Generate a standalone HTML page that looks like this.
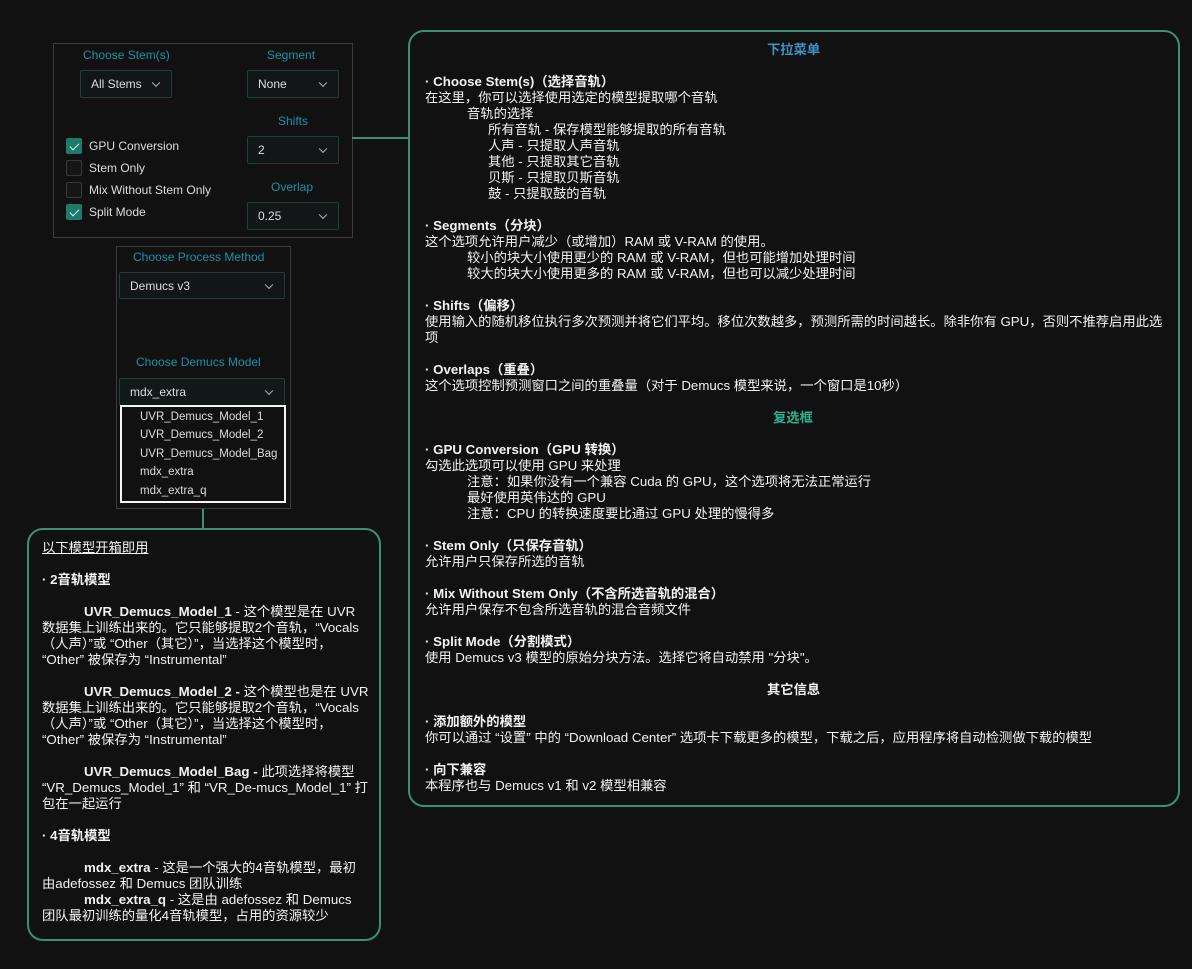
<!DOCTYPE html>
<html><head><meta charset="utf-8"><style>
*{margin:0;padding:0;box-sizing:border-box}
body{width:1192px;height:969px;background:#111112;position:relative;overflow:hidden;font-family:"Liberation Sans","Noto Sans CJK SC",sans-serif;color:#f0f0f0}
.a{position:absolute;white-space:nowrap}
.t{position:absolute;white-space:nowrap;font-size:13.3px;line-height:18px;color:#f2f2f2}
.b{font-weight:bold}
.box{position:absolute;border:2px solid #3a8f77;border-radius:16px;background:#111112}
.lbl{position:absolute;color:#1f8fa8;font-size:12px;white-space:nowrap}
.dd{position:absolute;border:1px solid #1f3f3b;background:#121616;color:#ddd;font-size:12px;padding-left:10px;display:flex;align-items:center;border-radius:2px}
.dd:after{content:"";position:absolute;right:12px;top:50%;width:5px;height:5px;border-right:1.3px solid #bbb;border-bottom:1.3px solid #bbb;transform:translateY(-70%) rotate(45deg)}
.cb{position:absolute;width:16px;height:16px;border:1px solid #3a3a3a;border-radius:2px;background:#161616}
.cb.on{background:#1d7a6a;border-color:#1d7a6a}
.cb.on:after{content:"";position:absolute;left:5px;top:2px;width:4px;height:8px;border-right:1.5px solid #cfe;border-bottom:1.5px solid #cfe;transform:rotate(45deg)}
.cl{position:absolute;color:#ddd;font-size:12px;white-space:nowrap}
</style></head><body>

<div class="a" style="left:53px;top:43px;width:300px;height:195px;border:1px solid #3c3c3c;background:#111"></div>
<div class="lbl" style="left:83px;top:48px">Choose Stem(s)</div>
<div class="lbl" style="left:267px;top:48px">Segment</div>
<div class="dd" style="left:80px;top:70px;width:92px;height:28px">All Stems</div>
<div class="dd" style="left:247px;top:70px;width:92px;height:28px">None</div>
<div class="lbl" style="left:278px;top:114px">Shifts</div>
<div class="dd" style="left:247px;top:136px;width:92px;height:28px">2</div>
<div class="lbl" style="left:271px;top:180px">Overlap</div>
<div class="dd" style="left:247px;top:202px;width:92px;height:28px">0.25</div>
<div class="cb on" style="left:66px;top:138px"></div><div class="cl" style="left:89px;top:139px">GPU Conversion</div>
<div class="cb" style="left:66px;top:160px"></div><div class="cl" style="left:89px;top:161px">Stem Only</div>
<div class="cb" style="left:66px;top:182px"></div><div class="cl" style="left:89px;top:183px">Mix Without Stem Only</div>
<div class="cb on" style="left:66px;top:204px"></div><div class="cl" style="left:89px;top:205px">Split Mode</div>

<div class="a" style="left:352px;top:137px;width:57px;height:2px;background:#3a8f77"></div>
<div class="a" style="left:202px;top:508px;width:2px;height:21px;background:#3a8f77"></div>

<div class="a" style="left:116px;top:246px;width:175px;height:263px;border:1px solid #3c3c3c;background:#111"></div>
<div class="lbl" style="left:133px;top:250px">Choose Process Method</div>
<div class="dd" style="left:119px;top:272px;width:166px;height:27px">Demucs v3</div>
<div class="lbl" style="left:136px;top:355px">Choose Demucs Model</div>
<div class="dd" style="left:119px;top:378px;width:166px;height:28px;background:#0f1a19">mdx_extra</div>
<div class="a" style="left:120px;top:405px;width:166px;height:98px;border:2px solid #f4f4f4;background:#111"></div>
<div class="cl" style="left:140px;top:411px;font-size:11.5px">UVR_Demucs_Model_1</div>
<div class="cl" style="left:140px;top:429px;font-size:11.5px">UVR_Demucs_Model_2</div>
<div class="cl" style="left:140px;top:448px;font-size:11.5px">UVR_Demucs_Model_Bag</div>
<div class="cl" style="left:140px;top:466px;font-size:11.5px">mdx_extra</div>
<div class="cl" style="left:140px;top:485px;font-size:11.5px">mdx_extra_q</div>

<div class="box" style="left:408px;top:30px;width:772px;height:777px"></div>
<div class="t b" style="left:767px;top:41px;color:#3d92c8">下拉菜单</div>
<div class="t b" style="left:425px;top:73px">· Choose Stem(s)（选择音轨）</div>
<div class="t" style="left:425px;top:89px">在这里，你可以选择使用选定的模型提取哪个音轨</div>
<div class="t" style="left:467px;top:105px">音轨的选择</div>
<div class="t" style="left:488px;top:121px">所有音轨 - 保存模型能够提取的所有音轨</div>
<div class="t" style="left:488px;top:137px">人声 - 只提取人声音轨</div>
<div class="t" style="left:488px;top:153px">其他 - 只提取其它音轨</div>
<div class="t" style="left:488px;top:169px">贝斯 - 只提取贝斯音轨</div>
<div class="t" style="left:488px;top:185px">鼓 - 只提取鼓的音轨</div>
<div class="t b" style="left:425px;top:217px">· Segments（分块）</div>
<div class="t" style="left:425px;top:233px">这个选项允许用户减少（或增加）RAM 或 V-RAM 的使用。</div>
<div class="t" style="left:467px;top:249px">较小的块大小使用更少的 RAM 或 V-RAM，但也可能增加处理时间</div>
<div class="t" style="left:467px;top:265px">较大的块大小使用更多的 RAM 或 V-RAM，但也可以减少处理时间</div>
<div class="t b" style="left:425px;top:297px">· Shifts（偏移）</div>
<div class="t" style="left:425px;top:313px">使用输入的随机移位执行多次预测并将它们平均。移位次数越多，预测所需的时间越长。除非你有 GPU，否则不推荐启用此选</div>
<div class="t" style="left:425px;top:329px">项</div>
<div class="t b" style="left:425px;top:361px">· Overlaps（重叠）</div>
<div class="t" style="left:425px;top:377px">这个选项控制预测窗口之间的重叠量（对于 Demucs 模型来说，一个窗口是10秒）</div>
<div class="t b" style="left:773px;top:409px;color:#2fb08f">复选框</div>
<div class="t b" style="left:425px;top:441px">· GPU Conversion（GPU 转换）</div>
<div class="t" style="left:425px;top:457px">勾选此选项可以使用 GPU 来处理</div>
<div class="t" style="left:467px;top:473px">注意：如果你没有一个兼容 Cuda 的 GPU，这个选项将无法正常运行</div>
<div class="t" style="left:467px;top:489px">最好使用英伟达的 GPU</div>
<div class="t" style="left:467px;top:505px">注意：CPU 的转换速度要比通过 GPU 处理的慢得多</div>
<div class="t b" style="left:425px;top:537px">· Stem Only（只保存音轨）</div>
<div class="t" style="left:425px;top:553px">允许用户只保存所选的音轨</div>
<div class="t b" style="left:425px;top:585px">· Mix Without Stem Only（不含所选音轨的混合）</div>
<div class="t" style="left:425px;top:601px">允许用户保存不包含所选音轨的混合音频文件</div>
<div class="t b" style="left:425px;top:633px">· Split Mode（分割模式）</div>
<div class="t" style="left:425px;top:649px">使用 Demucs v3 模型的原始分块方法。选择它将自动禁用 "分块"。</div>
<div class="t b" style="left:767px;top:681px">其它信息</div>
<div class="t b" style="left:425px;top:713px">· 添加额外的模型</div>
<div class="t" style="left:425px;top:729px">你可以通过 “设置” 中的 “Download Center” 选项卡下载更多的模型，下载之后，应用程序将自动检测做下载的模型</div>
<div class="t b" style="left:425px;top:761px">· 向下兼容</div>
<div class="t" style="left:425px;top:777px">本程序也与 Demucs v1 和 v2 模型相兼容</div>

<div class="box" style="left:27px;top:528px;width:354px;height:413px"></div>
<div class="t" style="left:42px;top:539px;text-decoration:underline">以下模型开箱即用</div>
<div class="t b" style="left:42px;top:571px">· 2音轨模型</div>
<div class="t" style="left:84px;top:603px"><b>UVR_Demucs_Model_1</b> - 这个模型是在 UVR</div>
<div class="t" style="left:42px;top:619px">数据集上训练出来的。它只能够提取2个音轨，“Vocals</div>
<div class="t" style="left:42px;top:635px">（人声）”或 “Other（其它）”，当选择这个模型时，</div>
<div class="t" style="left:42px;top:651px">“Other” 被保存为 “Instrumental”</div>
<div class="t" style="left:84px;top:683px"><b>UVR_Demucs_Model_2 -</b> 这个模型也是在 UVR</div>
<div class="t" style="left:42px;top:699px">数据集上训练出来的。它只能够提取2个音轨，“Vocals</div>
<div class="t" style="left:42px;top:715px">（人声）”或 “Other（其它）”，当选择这个模型时，</div>
<div class="t" style="left:42px;top:731px">“Other” 被保存为 “Instrumental”</div>
<div class="t" style="left:84px;top:763px"><b>UVR_Demucs_Model_Bag -</b> 此项选择将模型</div>
<div class="t" style="left:42px;top:779px">“VR_Demucs_Model_1” 和 “VR_De-mucs_Model_1” 打</div>
<div class="t" style="left:42px;top:795px">包在一起运行</div>
<div class="t b" style="left:42px;top:827px">· 4音轨模型</div>
<div class="t" style="left:84px;top:859px"><b>mdx_extra</b> - 这是一个强大的4音轨模型，最初</div>
<div class="t" style="left:42px;top:875px">由adefossez 和 Demucs 团队训练</div>
<div class="t" style="left:84px;top:891px"><b>mdx_extra_q</b> - 这是由 adefossez 和 Demucs</div>
<div class="t" style="left:42px;top:907px">团队最初训练的量化4音轨模型，占用的资源较少</div>

</body></html>
